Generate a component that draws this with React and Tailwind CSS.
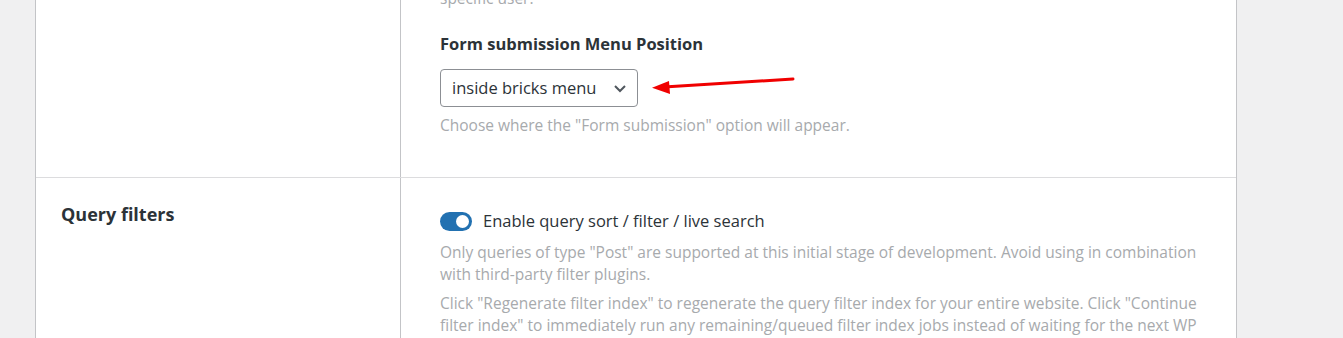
import React from 'react';

const font = { fontFamily: '"Open Sans", "Noto Sans", sans-serif' };

function Toggle() {
  return (
    <span className="relative inline-flex h-[19px] w-[32px] shrink-0 items-center rounded-full bg-[#2271b1]">
      <span className="absolute right-[3px] h-[13px] w-[13px] rounded-full bg-white" />
    </span>
  );
}

function Arrow() {
  return (
    <svg className="absolute left-[650px] top-[72px]" width="150" height="24" viewBox="0 0 150 24">
      <line x1="143" y1="7" x2="14" y2="15" stroke="#f00000" strokeWidth="3" strokeLinecap="round" />
      <polygon points="2,15.8 19,9 20,22" fill="#f00000" />
    </svg>
  );
}

export default function App() {
  return (
    <div className="relative h-[338px] w-[1343px] overflow-hidden bg-[#f0f0f1] pl-[35px] text-[#1d2327]" style={font}>
      <div className="w-[1202px] h-full border-x border-[#c3c4c7] bg-white">
        {/* menu position row */}
        <div className="grid grid-cols-[365px_1fr] border-b border-[#dcdcde]">
          <div className="border-r border-[#c3c4c7]" />
          <div className="pl-[39px] pr-[30px] pb-[41px]">
            <p className="-mt-[13px] text-[15.5px] leading-[22px] text-[#a7aaad]">specific user.</p>
            <h3 className="mt-[24px] text-[16.5px] font-bold leading-[22px] text-[#2c3338]">Form submission Menu Position</h3>
            <div className="mt-[14px] flex h-[38px] w-[198px] items-center justify-between rounded-[4px] border border-[#8c8f94] pl-[11px] pr-[9px]">
              <span className="text-[16.5px] text-[#2c3338]">inside bricks menu</span>
              <svg width="16" height="16" viewBox="0 0 16 16" fill="none">
                <path d="M3 6l5 5 5-5" stroke="#50575e" strokeWidth="2" />
              </svg>
            </div>
            <p className="mt-[7px] text-[15.5px] leading-[22px] text-[#a7aaad]">Choose where the "Form submission" option will appear.</p>
          </div>
        </div>

        {/* query filters row */}
        <div className="grid grid-cols-[365px_1fr]">
          <div className="border-r border-[#c3c4c7] pl-[25px] pt-[25px]">
            <h2 className="text-[18px] font-bold leading-[22px] text-[#2c3338]">Query filters</h2>
          </div>
          <div className="pl-[39px] pr-[30px] pt-[32px]">
            <label className="flex items-center gap-[11px]">
              <Toggle />
              <span className="text-[16.5px] leading-[22px] text-[#2c3338]">Enable query sort / filter / live search</span>
            </label>
            <p className="mt-[9px] text-[15.5px] leading-[22px] text-[#a7aaad]">
              Only queries of type "Post" are supported at this initial stage of development. Avoid using in combination<br />
              with third-party filter plugins.
            </p>
            <p className="mt-[7px] text-[15.5px] leading-[22px] text-[#a7aaad]">
              Click "Regenerate filter index" to regenerate the query filter index for your entire website. Click "Continue<br />
              filter index" to immediately run any remaining/queued filter index jobs instead of waiting for the next WP<br />
              cron job.
            </p>
          </div>
        </div>
      </div>
      <Arrow />
    </div>
  );
}
